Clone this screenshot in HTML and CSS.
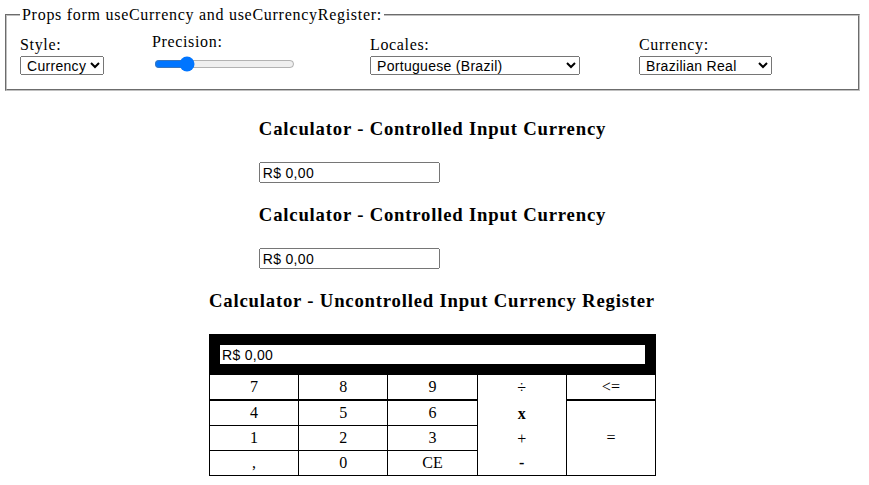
FILE: index.html
```html
<!DOCTYPE html>
<html lang="en">
<head>
<meta charset="utf-8">
<title>useCurrency demo</title>
<link rel="stylesheet" href="styles.css">
</head>
<body>
<div class="page">
  <fieldset class="props">
    <legend>Props form useCurrency and useCurrencyRegister:</legend>
    <div class="controls">
      <div class="field">
        <label for="style">Style:</label>
        <select id="style" class="sel sel-style">
          <option>Currency</option>
          <option>Decimal</option>
          <option>Percent</option>
        </select>
      </div>
      <div class="field">
        <label for="precision">Precision:</label>
        <input id="precision" class="range" type="range" min="0" max="10" value="2">
      </div>
      <div class="field">
        <label for="locales">Locales:</label>
        <select id="locales" class="sel sel-locale">
          <option>Portuguese (Brazil)</option>
          <option>English (United States)</option>
        </select>
      </div>
      <div class="field">
        <label for="currency">Currency:</label>
        <select id="currency" class="sel sel-currency">
          <option>Brazilian Real</option>
          <option>US Dollar</option>
        </select>
      </div>
    </div>
  </fieldset>

  <main class="calcs">
    <section class="calc calc-first">
      <h3 class="calc-title">Calculator - Controlled Input Currency</h3>
      <input class="money" type="text" value="R$ 0,00">
    </section>
    <section class="calc calc-next">
      <h3 class="calc-title">Calculator - Controlled Input Currency</h3>
      <input class="money" type="text" value="R$ 0,00">
    </section>
    <section class="calc calc-register">
      <h3 class="calc-title">Calculator - Uncontrolled Input Currency Register</h3>
      <div class="pad">
        <div class="band"><input class="display" type="text" value="R$ 0,00"></div>
        <button class="key top">7</button>
        <button class="key top">8</button>
        <button class="key top">9</button>
        <button class="key op">&divide;</button>
        <button class="key top">&lt;=</button>
        <button class="key">4</button>
        <button class="key">5</button>
        <button class="key">6</button>
        <button class="key op bold">x</button>
        <button class="key equals">=</button>
        <button class="key">1</button>
        <button class="key">2</button>
        <button class="key">3</button>
        <button class="key op">+</button>
        <button class="key">,</button>
        <button class="key">0</button>
        <button class="key">CE</button>
        <button class="key op last bold">-</button>
      </div>
    </section>
  </main>
</div>
</body>
</html>
```

FILE: styles.css
```css
html, body {
  margin: 0;
  padding: 0;
  background: #fff;
}

body {
  font-family: "Liberation Serif", "Times New Roman", serif;
  font-size: 16px;
  color: #000;
}

.page {
  padding: 6px 9px 0 5px;
}

.props {
  margin: 0;
  padding: 0 12px 10px 13px;
  border: 2px groove rgb(192, 192, 192);
}

.props legend {
  padding: 0 2px;
  line-height: 18px;
  letter-spacing: 0.72px;
}

.controls {
  display: grid;
  grid-template-columns: 132px 218px 269px 1fr;
  align-items: end;
  height: 51px;
  margin-bottom: 4px;
}

.field {
  display: flex;
  flex-direction: column;
  align-items: flex-start;
}

.field label {
  line-height: 18px;
  letter-spacing: 0.65px;
}

.sel {
  box-sizing: border-box;
  height: 19px;
  margin: 2px 0 0;
  padding-left: 2px;
  font-family: "Liberation Sans", Arial, sans-serif;
  font-size: 14px;
  letter-spacing: 0.3px;
}

.sel-style { width: 84px; }
.sel-locale { width: 210px; }
.sel-currency { width: 133px; }

.range {
  width: 141px;
  height: 16px;
  margin: 5px 2px 3px 2px;
}

.calcs {
  display: flex;
  flex-direction: column;
  align-items: center;
}

.calc {
  display: flex;
  flex-direction: column;
  align-items: flex-start;
}

.calc-first { margin-top: 27px; }
.calc-next { margin-top: 21px; }
.calc-register { margin-top: 21px; }

.calc-title {
  margin: 0;
  font-size: 18.72px;
  line-height: 22px;
  font-weight: bold;
  letter-spacing: 0.8px;
}

.money {
  box-sizing: border-box;
  width: 181px;
  height: 21px;
  margin-top: 22px;
  font-family: "Liberation Sans", Arial, sans-serif;
  font-size: 14px;
  letter-spacing: 0.3px;
}

.pad {
  box-sizing: border-box;
  width: 447px;
  margin-top: 22px;
  border-left: 1px solid #000;
  display: grid;
  grid-template-columns: repeat(5, 1fr);
  grid-template-rows: 41px 26px 25px 25px 25px;
}

.band {
  grid-column: 1 / -1;
  background: #000;
  padding: 11px 11px 11px 10px;
}

.display {
  box-sizing: border-box;
  display: block;
  width: 100%;
  height: 19px;
  border: 0;
  padding: 1px 2px;
  background: #fff;
  font-family: "Liberation Sans", Arial, sans-serif;
  font-size: 14px;
  letter-spacing: 0.3px;
  color: #000;
}

.key {
  box-sizing: border-box;
  margin: 0;
  padding: 0;
  background: #fff;
  color: #000;
  border: 0;
  border-right: 1px solid #000;
  border-bottom: 1px solid #000;
  font-family: "Liberation Serif", "Times New Roman", serif;
  font-size: 16px;
  display: flex;
  align-items: center;
  justify-content: center;
}

.key.top {
  border-bottom-width: 2px;
}

.key.op {
  border-bottom: 0;
}

.key.op.last {
  border-bottom: 1px solid #000;
}

.key.bold {
  font-weight: bold;
}

.key.equals {
  grid-row: span 3;
}
```
